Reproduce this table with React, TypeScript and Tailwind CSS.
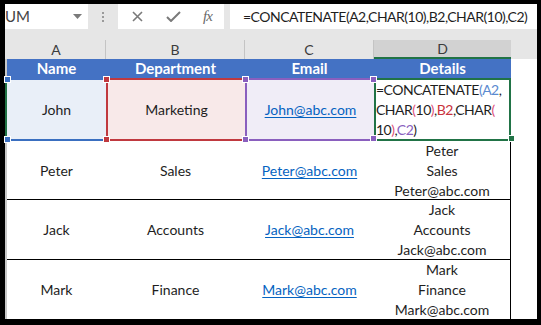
import React from 'react';

const people = [
  { name: 'Peter', dept: 'Sales', email: 'Peter@abc.com' },
  { name: 'Jack', dept: 'Accounts', email: 'Jack@abc.com' },
  { name: 'Mark', dept: 'Finance', email: 'Mark@abc.com' },
];

function Handle({ className }: { className: string }) {
  return <span className={`absolute w-[7px] h-[7px] border border-white z-10 ${className}`} />;
}

function DataRow({ p, h, last }: { p: (typeof people)[number]; h: string; last?: boolean }) {
  return (
    <div className={`flex shrink-0 ${h}`}>
      <div className="w-[2px] shrink-0 bg-[#c8c8c8]" />
      <div className={`flex w-[504px] shrink-0 bg-white ${last ? '' : 'border-b border-black'}`}>
        <div className="w-[99px] flex items-center justify-center">{p.name}</div>
        <div className="w-[139px] flex items-center justify-center">{p.dept}</div>
        <div className="w-[129px] flex items-center justify-center">
          <span className="text-[#0563c1] underline underline-offset-2">{p.email}</span>
        </div>
        <div className="w-[137px] border-r border-black flex flex-col items-center leading-[20px]">
          <span>{p.name}</span>
          <span>{p.dept}</span>
          <span>{p.email}</span>
        </div>
      </div>
      <div className="w-[26px] shrink-0 bg-white" />
    </div>
  );
}

export default function App() {
  return (
    <div className="w-[541px] h-[325px] bg-black pt-[4px] pl-[5px] pr-[4px] pb-[6px] font-['Lato','Liberation_Sans',sans-serif] text-[14px] text-[#1e1e1e]">
      <div className="h-full bg-[#e6e6e6] flex flex-col">
        {/* formula bar */}
        <div className="flex h-[25px] shrink-0">
          <div className="w-[83px] shrink-0 bg-white relative flex items-center">
            <span className="text-[#444] text-[15px]">UM</span>
            <svg className="absolute left-[68px] top-[10px]" width="9" height="5" viewBox="0 0 9 5">
              <path d="M0 0h9L4.5 5z" fill="#7a7a7a" />
            </svg>
          </div>
          <div className="w-[30px] shrink-0 flex flex-col items-center justify-center gap-[2px]">
            <span className="w-[2px] h-[2px] bg-[#9a9a9a]" />
            <span className="w-[2px] h-[2px] bg-[#9a9a9a]" />
            <span className="w-[2px] h-[2px] bg-[#9a9a9a]" />
          </div>
          <div className="w-[106px] shrink-0 bg-white flex items-center">
            <svg className="ml-[14px]" width="11" height="11" viewBox="0 0 11 11">
              <path d="M1 1l9 9M10 1l-9 9" stroke="#7a7a7a" strokeWidth="1.6" />
            </svg>
            <svg className="ml-[23px]" width="15" height="11" viewBox="0 0 15 11">
              <path d="M1 6l4 4L14 1" stroke="#7a7a7a" strokeWidth="2" fill="none" />
            </svg>
            <span className="ml-[22px] font-['Liberation_Serif',serif] italic text-[15px] text-[#6a6a6a] tracking-[-1px]">fx</span>
          </div>
          <div className="w-[6px] shrink-0" />
          <div className="flex-1 min-w-0 whitespace-nowrap bg-white flex items-center pl-[13px] tracking-[-0.5px]">
            =CONCATENATE(A2,CHAR(10),B2,CHAR(10),C2)
          </div>
        </div>

        <div className="h-[11px] shrink-0" />

        {/* column letters */}
        <div className="flex h-[19px] shrink-0 text-[14px] text-[#3c3c3c]">
          <div className="w-[2px]" />
          <div className="w-[99px] border-r border-[#c4c4c4] flex items-center justify-center">A</div>
          <div className="w-[139px] border-r border-[#c4c4c4] flex items-center justify-center">B</div>
          <div className="w-[129px] border-r border-[#c4c4c4] flex items-center justify-center">C</div>
          <div className="w-[137px] bg-[#d2d2d2] border-b-2 border-[#217346] flex items-center justify-center">D</div>
          <div className="w-[26px]" />
        </div>

        {/* table header */}
        <div className="flex h-[19px] shrink-0">
          <div className="w-[2px] bg-[#c8c8c8]" />
          <div className="w-[504px] bg-[#4472c4] flex font-bold text-white text-[15px]">
            <div className="w-[99px] flex items-center justify-center">Name</div>
            <div className="w-[139px] flex items-center justify-center">Department</div>
            <div className="w-[129px] flex items-center justify-center">Email</div>
            <div className="w-[137px] flex items-center justify-center">Details</div>
          </div>
          <div className="w-[26px] bg-white" />
        </div>

        {/* row 2 with formula */}
        <div className="flex h-[63px] shrink-0 relative">
          <div className="w-[2px] bg-[#217346]" />
          <div className="w-[99px] bg-[#e9eff8] border-t-2 border-t-[#4472c4] border-b-2 border-b-[#3a6fc0] flex items-center justify-center">
            John
          </div>
          <div className="w-[139px] bg-[#f8e9e9] border-2 border-r-0 border-[#c0393f] flex items-center justify-center">
            Marketing
          </div>
          <div className="w-[129px] bg-[#f0edf7] border-2 border-r-0 border-[#8a5fbe] flex items-center justify-center">
            <span className="text-[#0563c1] underline underline-offset-2">John@abc.com</span>
          </div>
          <div className="w-[137px] bg-white border-2 border-[#217346] leading-[20px] whitespace-nowrap tracking-[-0.5px]">
            <div>
              =CONCATENATE<span className="text-[#5a8ad0]">(A2</span>,
            </div>
            <div>
              CHAR<span className="text-[#e0507a]">(</span>10<span className="text-[#e0507a]">)</span>,<span className="text-[#c8323c]">B2</span>,CHAR<span className="text-[#e0507a]">(</span>
            </div>
            <div>
              10<span className="text-[#e0507a]">)</span>,<span className="text-[#8a5fbe]">C2</span>)
            </div>
          </div>
          <div className="w-[26px] bg-white" />

          <Handle className="left-[-1px] top-[-2px] bg-[#3a6fc0]" />
          <Handle className="left-[-1px] top-[58px] bg-[#3a6fc0]" />
          <Handle className="left-[98px] top-[-2px] bg-[#c0393f]" />
          <Handle className="left-[98px] top-[58px] bg-[#c0393f]" />
          <Handle className="left-[237px] top-[-2px] bg-[#8a5fbe]" />
          <Handle className="left-[237px] top-[58px] bg-[#8a5fbe]" />
          <Handle className="left-[365px] top-[-2px] bg-[#8a5fbe]" />
          <Handle className="left-[365px] top-[57px] bg-[#8a5fbe]" />
          <Handle className="left-[503px] top-[57px] bg-[#217346]" />
        </div>

        <DataRow p={people[0]} h="h-[59px]" />
        <DataRow p={people[1]} h="h-[60px]" />
        <DataRow p={people[2]} h="h-[59px]" last />
      </div>
    </div>
  );
}
